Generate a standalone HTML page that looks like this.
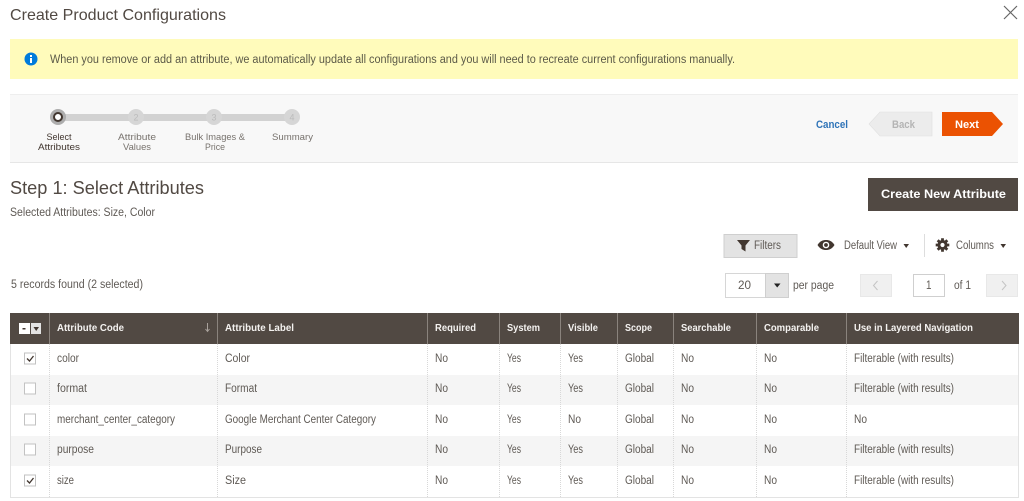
<!DOCTYPE html>
<html><head><meta charset="utf-8"><title>Create Product Configurations</title>
<style>
html,body{margin:0;padding:0;background:#fff;width:1024px;height:501px;overflow:hidden}
svg{display:block;filter:blur(.35px)}
text{font-family:"Liberation Sans",sans-serif;font-size:11.5px;fill:#5f5a55}
.h text{fill:#f4f2f0;font-weight:bold;font-size:10.5px}
.s text{font-size:9.5px;fill:#77726d;text-anchor:middle}
</style></head><body>
<svg width="1024" height="501" viewBox="0 0 1024 501" xmlns="http://www.w3.org/2000/svg">
<text x="10" y="20" textLength="216" lengthAdjust="spacingAndGlyphs" style="font-size:16px;fill:#514943">Create Product Configurations</text>
<path d="M1004 6L1017 19M1017 6L1004 19" stroke="#666" stroke-width="1.2" fill="none"/>
<rect x="10" y="39" width="1008" height="40" fill="#fffbbb"/>
<circle cx="31" cy="59" r="6.5" fill="#007bdb"/>
<rect x="30" y="58" width="2" height="5" fill="#fff"/><rect x="30" y="55" width="2" height="2" fill="#fff"/>
<text x="50" y="63" textLength="685" lengthAdjust="spacingAndGlyphs" style="fill:#5c5a48">When you remove or add an attribute, we automatically update all configurations and you will need to recreate current configurations manually.</text>
<rect x="10" y="94" width="1008" height="69" fill="#f8f8f8"/>
<rect x="10" y="94" width="1008" height="1" fill="#eeeeee"/><rect x="10" y="162" width="1008" height="1" fill="#e6e6e6"/>
<rect x="58" y="114" width="234" height="7" fill="#d2d2d2"/>
<circle cx="58" cy="117" r="8" fill="#adadad"/><circle cx="58" cy="117" r="4" fill="#fff" stroke="#41362f" stroke-width="2"/>
<circle cx="136" cy="117" r="8" fill="#d6d6d6"/><circle cx="214" cy="117" r="8" fill="#d6d6d6"/><circle cx="292" cy="117" r="8" fill="#d6d6d6"/>
<g class="s">
<text x="136" y="120.500" style="fill:#bbb;font-size:9px">2</text><text x="214" y="120.500" style="fill:#bbb;font-size:9px">3</text><text x="292" y="120.500" style="fill:#bbb;font-size:9px">4</text>
<text x="59" y="140" textLength="25" lengthAdjust="spacingAndGlyphs" style="fill:#41362f">Select</text>
<text x="59" y="150" textLength="42" lengthAdjust="spacingAndGlyphs" style="fill:#41362f">Attributes</text>
<text x="137" y="140" textLength="38" lengthAdjust="spacingAndGlyphs">Attribute</text>
<text x="137" y="150" textLength="28" lengthAdjust="spacingAndGlyphs">Values</text>
<text x="215" y="140" textLength="60" lengthAdjust="spacingAndGlyphs">Bulk Images &amp;</text>
<text x="215" y="150" textLength="20" lengthAdjust="spacingAndGlyphs">Price</text>
<text x="292.500" y="140" textLength="41" lengthAdjust="spacingAndGlyphs">Summary</text>
</g>
<text x="816" y="128" textLength="32" lengthAdjust="spacingAndGlyphs" style="fill:#2f74b8;font-weight:bold;font-size:11px">Cancel</text>
<path d="M869 124L880 112H932V136H880Z" fill="#ececec" stroke="#e0e0e0" stroke-width=".6"/>
<text x="892" y="128" textLength="23" lengthAdjust="spacingAndGlyphs" style="fill:#b4b4b4;font-weight:bold;font-size:11px">Back</text>
<path d="M942 112H992L1003 124L992 136H942Z" fill="#eb5202"/>
<text x="955" y="128" textLength="24" lengthAdjust="spacingAndGlyphs" style="fill:#fff;font-weight:bold;font-size:11px">Next</text>
<text x="10" y="194" textLength="194" lengthAdjust="spacingAndGlyphs" style="font-size:18px;fill:#514943">Step 1: Select Attributes</text>
<text x="10" y="216" textLength="145" lengthAdjust="spacingAndGlyphs">Selected Attributes: Size, Color</text>
<rect x="868" y="178" width="150" height="33" fill="#514943"/>
<text x="881" y="198" textLength="125" lengthAdjust="spacingAndGlyphs" style="fill:#fff;font-weight:bold;font-size:12px">Create New Attribute</text>
<rect x="724" y="234.500" width="73" height="23" fill="#e3e3e3" stroke="#cfcfcf"/>
<path d="M737 240H750L745.500 245.500V251.500L741.500 249V245.500Z" fill="#41362f"/>
<text x="754" y="249" textLength="27" lengthAdjust="spacingAndGlyphs">Filters</text>
<path d="M817.500 245C820 241 823 240 826 240S832 241 834.500 245C832 249 829 250 826 250S820 249 817.500 245Z" fill="#41362f"/>
<circle cx="826" cy="245" r="3.300" fill="#fff"/><circle cx="826" cy="245" r="1.900" fill="#41362f"/>
<text x="844" y="249" textLength="53" lengthAdjust="spacingAndGlyphs">Default View</text>
<path d="M903.500 244H909L906.200 248Z" fill="#41362f"/>
<rect x="924" y="234" width="1" height="23" fill="#ddd"/>
<path d="M942.500 238.200V251.800M935.700 245H949.300M937.700 240.200L947.300 249.800M947.300 240.200L937.700 249.800" stroke="#41362f" stroke-width="2.800"/>
<circle cx="942.500" cy="245" r="5" fill="#41362f"/>
<circle cx="942.500" cy="245" r="2.100" fill="#fff"/>
<text x="956" y="249" textLength="38" lengthAdjust="spacingAndGlyphs">Columns</text>
<path d="M1000.500 244H1006L1003.200 248Z" fill="#41362f"/>
<text x="11" y="288" textLength="132" lengthAdjust="spacingAndGlyphs">5 records found (2 selected)</text>
<rect x="725.500" y="273.500" width="63" height="24" fill="#fff" stroke="#d6d6d6"/>
<rect x="765.500" y="273.500" width="23" height="24" fill="#e3e3e3" stroke="#cfcfcf"/>
<text x="738" y="289" textLength="13" lengthAdjust="spacingAndGlyphs">20</text>
<path d="M774 283.500H780.500L777.200 287.500Z" fill="#222"/>
<text x="793" y="289" textLength="41" lengthAdjust="spacingAndGlyphs">per page</text>
<rect x="860.500" y="274.500" width="31" height="22" fill="#f0f0f0" stroke="#e8e8e8"/>
<path d="M877.500 281L873.500 285.500L877.500 290" stroke="#c4c4c4" stroke-width="1" fill="none"/>
<rect x="913.500" y="274.500" width="31" height="22" fill="#fff" stroke="#cfcfcf"/>
<text x="926" y="289" textLength="5.500" lengthAdjust="spacingAndGlyphs">1</text>
<text x="954" y="289" textLength="17" lengthAdjust="spacingAndGlyphs">of 1</text>
<rect x="986.500" y="274.500" width="31" height="22" fill="#f0f0f0" stroke="#e8e8e8"/>
<path d="M1002 281L1006 285.500L1002 290" stroke="#c4c4c4" stroke-width="1" fill="none"/>

<rect x="11" y="344" width="1007" height="153" fill="#fff"/>
<rect x="11" y="375" width="1007" height="30" fill="#f5f5f5"/>
<rect x="11" y="436" width="1007" height="30" fill="#f5f5f5"/>
<path d="M49.500 344V497M217.500 344V497M427.500 344V497M499.500 344V497M560.500 344V497M617.500 344V497M673.500 344V497M756.500 344V497M846.500 344V497" stroke="#d8d8d8" stroke-dasharray="1 1"/>
<path d="M10.500 344V497.500H1018.500V344" stroke="#e3e3e3" fill="none"/>
<rect x="10" y="313" width="1009" height="31" fill="#514943"/>
<path d="M49.500 313V344M217.500 313V344M427.500 313V344M499.500 313V344M560.500 313V344M617.500 313V344M673.500 313V344M756.500 313V344M846.500 313V344" stroke="#8a837d"/>
<rect x="19" y="323" width="11" height="11" fill="#fff"/><rect x="31" y="323" width="10" height="11" fill="#e3e3e3"/>
<rect x="22.500" y="328" width="3" height="1.500" fill="#41362f"/><path d="M33.500 327H39L36.200 331Z" fill="#41362f"/>
<g class="h">
<text x="57" y="331" textLength="67" lengthAdjust="spacingAndGlyphs">Attribute Code</text>
<text x="225" y="331" textLength="69" lengthAdjust="spacingAndGlyphs">Attribute Label</text>
<text x="435" y="331" textLength="41" lengthAdjust="spacingAndGlyphs">Required</text>
<text x="507" y="331" textLength="33" lengthAdjust="spacingAndGlyphs">System</text>
<text x="568" y="331" textLength="30" lengthAdjust="spacingAndGlyphs">Visible</text>
<text x="625" y="331" textLength="27" lengthAdjust="spacingAndGlyphs">Scope</text>
<text x="681" y="331" textLength="50" lengthAdjust="spacingAndGlyphs">Searchable</text>
<text x="764" y="331" textLength="55" lengthAdjust="spacingAndGlyphs">Comparable</text>
<text x="854" y="331" textLength="119" lengthAdjust="spacingAndGlyphs">Use in Layered Navigation</text>
</g>
<path d="M207.500 323V331M205.500 329L207.500 331.500L209.500 329" stroke="#a9a29c" fill="none"/>

<rect x="24.500" y="353" width="11" height="11" fill="#fff" stroke="#c2c2c2"/>
<rect x="24.500" y="383" width="11" height="11" fill="#fff" stroke="#c2c2c2"/>
<rect x="24.500" y="414" width="11" height="11" fill="#fff" stroke="#c2c2c2"/>
<rect x="24.500" y="444" width="11" height="11" fill="#fff" stroke="#c2c2c2"/>
<rect x="24.500" y="475" width="11" height="11" fill="#fff" stroke="#c2c2c2"/>
<path d="M27 358.500L29.500 361L33.500 356M27 480.500L29.500 483L33.500 478" stroke="#41362f" stroke-width="1.300" fill="none"/>

<text x="57" y="362" textLength="22" lengthAdjust="spacingAndGlyphs">color</text><text x="225" y="362" textLength="25" lengthAdjust="spacingAndGlyphs">Color</text><text x="435" y="362" textLength="13" lengthAdjust="spacingAndGlyphs">No</text><text x="507" y="362" textLength="14" lengthAdjust="spacingAndGlyphs">Yes</text><text x="568" y="362" textLength="15" lengthAdjust="spacingAndGlyphs">Yes</text><text x="625" y="362" textLength="29" lengthAdjust="spacingAndGlyphs">Global</text><text x="681" y="362" textLength="13" lengthAdjust="spacingAndGlyphs">No</text><text x="764" y="362" textLength="13" lengthAdjust="spacingAndGlyphs">No</text><text x="854" y="362" textLength="100" lengthAdjust="spacingAndGlyphs">Filterable (with results)</text>

<text x="57" y="392" textLength="30" lengthAdjust="spacingAndGlyphs">format</text><text x="225" y="392" textLength="32" lengthAdjust="spacingAndGlyphs">Format</text><text x="435" y="392" textLength="13" lengthAdjust="spacingAndGlyphs">No</text><text x="507" y="392" textLength="14" lengthAdjust="spacingAndGlyphs">Yes</text><text x="568" y="392" textLength="15" lengthAdjust="spacingAndGlyphs">Yes</text><text x="625" y="392" textLength="29" lengthAdjust="spacingAndGlyphs">Global</text><text x="681" y="392" textLength="13" lengthAdjust="spacingAndGlyphs">No</text><text x="764" y="392" textLength="13" lengthAdjust="spacingAndGlyphs">No</text><text x="854" y="392" textLength="100" lengthAdjust="spacingAndGlyphs">Filterable (with results)</text>

<text x="57" y="423" textLength="118" lengthAdjust="spacingAndGlyphs">merchant_center_category</text><text x="225" y="423" textLength="151" lengthAdjust="spacingAndGlyphs">Google Merchant Center Category</text><text x="435" y="423" textLength="13" lengthAdjust="spacingAndGlyphs">No</text><text x="507" y="423" textLength="14" lengthAdjust="spacingAndGlyphs">Yes</text><text x="568" y="423" textLength="13" lengthAdjust="spacingAndGlyphs">No</text><text x="625" y="423" textLength="29" lengthAdjust="spacingAndGlyphs">Global</text><text x="681" y="423" textLength="13" lengthAdjust="spacingAndGlyphs">No</text><text x="764" y="423" textLength="13" lengthAdjust="spacingAndGlyphs">No</text><text x="854" y="423" textLength="13" lengthAdjust="spacingAndGlyphs">No</text>

<text x="57" y="453" textLength="37" lengthAdjust="spacingAndGlyphs">purpose</text><text x="225" y="453" textLength="37" lengthAdjust="spacingAndGlyphs">Purpose</text><text x="435" y="453" textLength="13" lengthAdjust="spacingAndGlyphs">No</text><text x="507" y="453" textLength="14" lengthAdjust="spacingAndGlyphs">Yes</text><text x="568" y="453" textLength="15" lengthAdjust="spacingAndGlyphs">Yes</text><text x="625" y="453" textLength="29" lengthAdjust="spacingAndGlyphs">Global</text><text x="681" y="453" textLength="13" lengthAdjust="spacingAndGlyphs">No</text><text x="764" y="453" textLength="13" lengthAdjust="spacingAndGlyphs">No</text><text x="854" y="453" textLength="100" lengthAdjust="spacingAndGlyphs">Filterable (with results)</text>

<text x="57" y="484" textLength="17" lengthAdjust="spacingAndGlyphs">size</text><text x="225" y="484" textLength="21" lengthAdjust="spacingAndGlyphs">Size</text><text x="435" y="484" textLength="13" lengthAdjust="spacingAndGlyphs">No</text><text x="507" y="484" textLength="14" lengthAdjust="spacingAndGlyphs">Yes</text><text x="568" y="484" textLength="15" lengthAdjust="spacingAndGlyphs">Yes</text><text x="625" y="484" textLength="29" lengthAdjust="spacingAndGlyphs">Global</text><text x="681" y="484" textLength="13" lengthAdjust="spacingAndGlyphs">No</text><text x="764" y="484" textLength="13" lengthAdjust="spacingAndGlyphs">No</text><text x="854" y="484" textLength="100" lengthAdjust="spacingAndGlyphs">Filterable (with results)</text>
</svg>
</body></html>
